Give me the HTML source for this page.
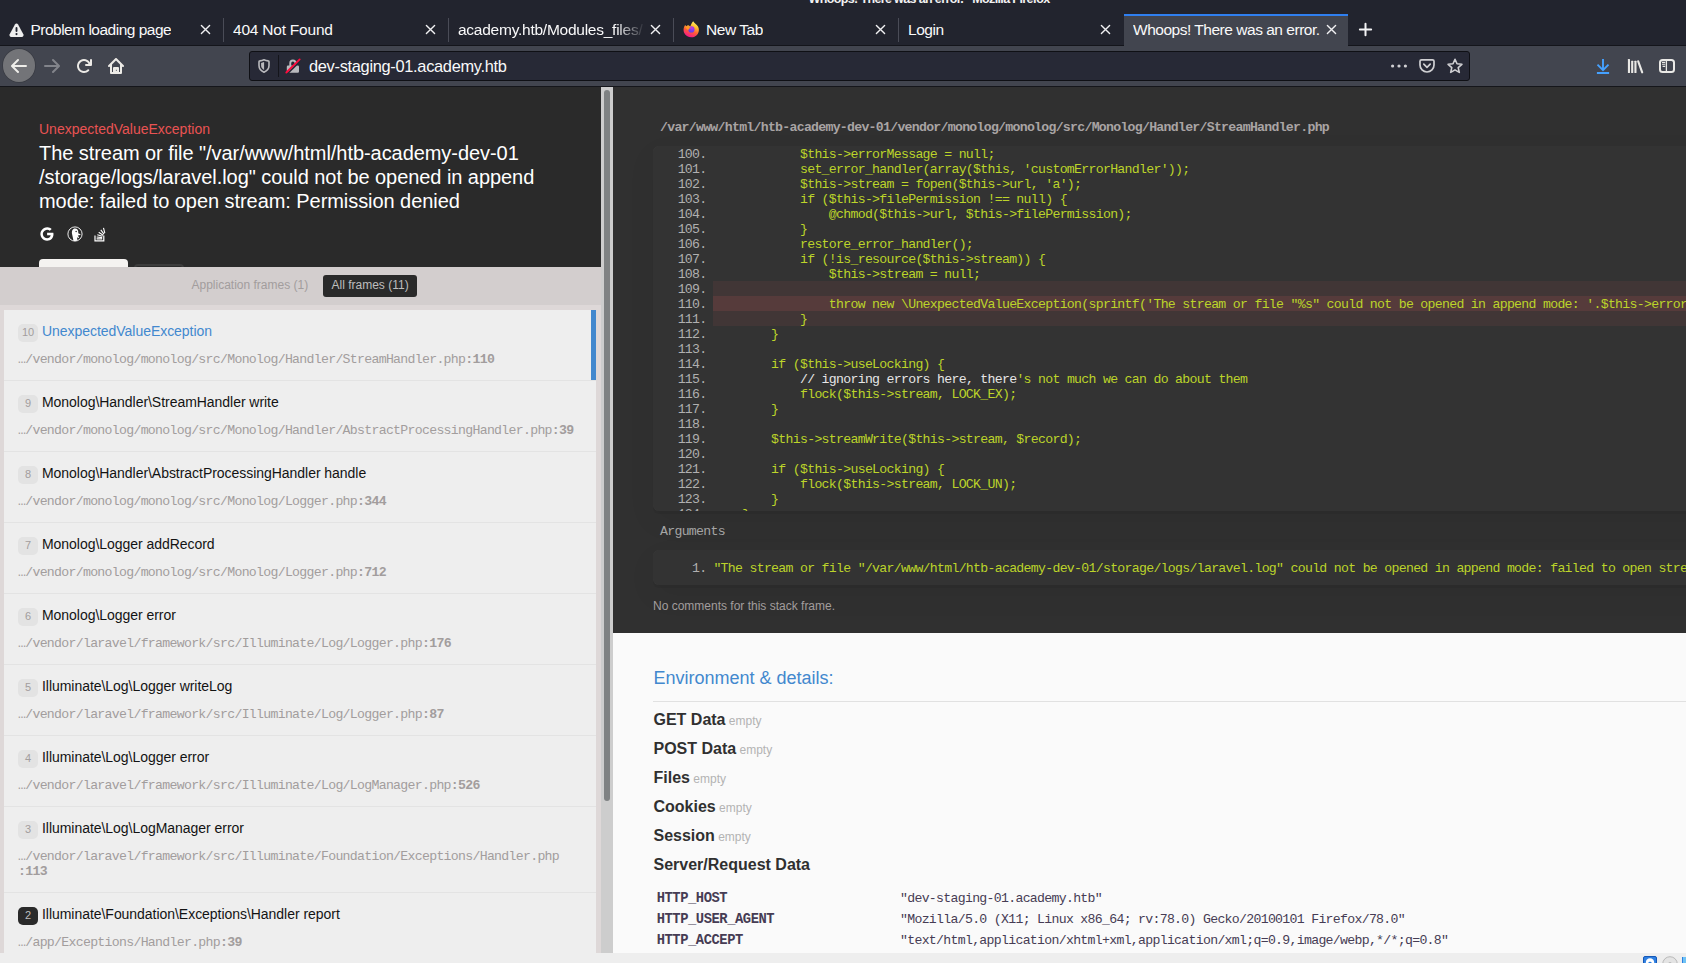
<!DOCTYPE html>
<html>
<head>
<meta charset="utf-8">
<title>Whoops! There was an error.</title>
<style>
*{box-sizing:border-box;}
html,body{margin:0;padding:0;}
body{width:1686px;height:963px;overflow:hidden;position:relative;background:#2a2a2a;font:12px "Liberation Sans",sans-serif;color:#131313;}
.abs{position:absolute;}
/* ---------- browser chrome ---------- */
#tabbar{left:0;top:0;width:1686px;height:45px;background:#22242e;overflow:hidden;}
#wintitle{left:808.500px;top:-8px;width:260px;font:bold 12.5px "Liberation Sans",sans-serif;letter-spacing:-0.63px;color:#f2f2f2;white-space:nowrap;}
.tab{top:9px;height:36px;width:225px;color:#f9f9fa;font:15.5px "Liberation Sans",sans-serif;letter-spacing:-0.45px;}
.tab .lbl{position:absolute;top:12px;white-space:nowrap;overflow:hidden;}
.tab .sep{position:absolute;left:-1px;top:9px;width:1px;height:24px;background:#4a4c57;}
.tab .x{position:absolute;right:13px;top:15px;width:11px;height:11px;}
#toolbar{left:0;top:45px;width:1686px;height:42px;background:#42454f;border-top:1px solid #14151b;border-bottom:1px solid #15161b;}
#urlbar{left:249px;top:51px;width:1221px;height:30px;background:#272936;border:1px solid #0f1015;border-radius:3px;}
#urltext{left:309px;top:57px;letter-spacing:-0.31px;font:16.4px "Liberation Sans",sans-serif;color:#f9f9fa;white-space:nowrap;}

.tab.active{background:#42454f;top:14px;height:31px;border-top:2px solid #2f7ff0;width:224px;}
.tab.active .lbl{top:5px;}
.tab.active .x{top:8px;right:11px;}
.fade{-webkit-mask-image:linear-gradient(to right,#000 158px,transparent 187px);mask-image:linear-gradient(to right,#000 158px,transparent 187px);}
.ic{position:absolute;}
/* ---------- left panel ---------- */
#lhead{left:0;top:87px;width:601px;height:180px;background:#2a2a2a;overflow:hidden;}
#exctitle{left:39px;top:121px;font-size:14px;color:#e95353;white-space:nowrap;}
#excmsg{left:39px;top:141px;width:540px;font-size:20px;line-height:24px;color:#fff;letter-spacing:-0.06px;white-space:nowrap;}
#fdesc{left:0;top:267px;width:601px;height:38px;background:#d3cece;}
#lbody{left:0;top:305px;width:601px;height:648px;background:#ded8d8;}
.ftab{top:275px;height:22px;line-height:20px;font-size:12px;color:#a29d9d;padding:0 8px;border-radius:3px;white-space:nowrap;}
.ftab.act{background:#2a2a2a;color:#bebebe;}
.frame{left:4px;width:592px;background:#eeeeee;border-bottom:1px solid #e3e3e3;height:71px;}
.frame .idx{position:absolute;left:14px;top:14px;width:20px;height:18px;line-height:16.500px;border-radius:5px;background:#e3e3e3;color:#a29d9d;font-size:11px;text-align:center;}
.frame.app .idx{background:#2a2a2a;color:#bebebe;}
.frame .cls{position:absolute;left:38px;top:13px;font-size:14px;line-height:16px;white-space:nowrap;color:#131313;letter-spacing:-0.04px;}
.frame.active .cls{color:#4288ce;}
.frame .file{position:absolute;left:14px;top:42px;width:570px;font:13.2px/15px "Liberation Mono",monospace;letter-spacing:-0.7px;color:#a29d9d;white-space:nowrap;}
.frame .file b{font-weight:bold;}
.frame .bar{position:absolute;right:0;top:0;width:5px;height:70px;background:#4288ce;}
#lscroll{left:601px;top:87px;width:12px;height:866px;background:#cdcdcd;}
#lthumb{left:604px;top:90px;width:6px;height:711px;border-radius:3px;background:#7f8283;}
/* ---------- right panel ---------- */
#rdark{left:613px;top:87px;width:1073px;height:546px;background:#303030;overflow:hidden;}

.rfile{left:660px;top:120px;font:bold 13.2px/15px "Liberation Mono",monospace;letter-spacing:-0.72px;color:#a9a4a4;white-space:nowrap;}
#code{left:653px;top:146px;width:1100px;height:365px;background:#333;border-radius:6px 0 0 6px;overflow:hidden;box-shadow:0 3px 0 rgba(0,0,0,.05),0 10px 30px rgba(0,0,0,.05),inset 0 0 1px 0 rgba(255,255,255,.07);}
#args{left:653px;top:550px;width:1100px;height:35px;background:#333;border-radius:6px 0 0 6px;overflow:hidden;box-shadow:0 3px 0 rgba(0,0,0,.05),0 10px 30px rgba(0,0,0,.05),inset 0 0 1px 0 rgba(255,255,255,.07);}
.ln{position:relative;height:15px;font:13.2px/15px "Liberation Mono",monospace;letter-spacing:-0.7px;white-space:pre;color:#bcd42a;}
.ln .no{position:absolute;left:0;width:53.500px;text-align:right;color:#b0b0b0;top:1px;}
.ln .cd{position:absolute;left:60.400px;right:0;top:0;height:15px;line-height:17px;}
.ln .cd i{font-style:normal;color:#e6e6e6;}
.ln.cur .cd{background:#413636;}
.ln.cura .cd{background:#563b3b;}
.argl{left:660px;top:524px;font:13.2px/15px "Liberation Mono",monospace;letter-spacing:-0.7px;color:#a5a5a5;}
.nocom{left:653px;top:599px;font-size:12px;line-height:14px;color:#a29d9d;white-space:nowrap;}
#rlight{left:613px;top:633px;width:1073px;height:320px;background:#fafafa;overflow:hidden;}

.dh{left:653.500px;top:668px;font-size:18px;line-height:21px;color:#4288ce;white-space:nowrap;}
.dl{left:653.500px;font:bold 16px/18px "Liberation Sans",sans-serif;color:#303030;white-space:nowrap;}
.dl span{font:12px "Liberation Sans",sans-serif;color:#b3b3b3;}
.dk{left:656.700px;font:bold 13.8px/16px "Liberation Mono",monospace;letter-spacing:-0.45px;color:#463c54;white-space:nowrap;}
.dv{left:900px;font:13.2px/16px "Liberation Mono",monospace;letter-spacing:-0.7px;color:#463c54;white-space:nowrap;}
#status{left:0;top:953px;width:1686px;height:10px;background:#eeeeee;}
</style>
</head>
<body>
<!-- ================= BROWSER CHROME ================= -->
<div id="tabbar" class="abs">
  <div id="wintitle" class="abs">Whoops! There was an error. - Mozilla Firefox</div>

  <div class="abs tab" style="left:-1px">
    <svg class="abs" style="left:9.500px;top:13.600px" width="15" height="14.300" viewBox="0 0 16 15" preserveAspectRatio="none"><path d="M8 0.6c.7 0 1.3.4 1.7 1l5.6 10.2c.7 1.3-.2 2.8-1.7 2.8H2.4c-1.5 0-2.400-1.500-1.700-2.800L6.300 1.600C6.700 1 7.300.6 8 .6z" fill="#eeeeee"/><rect x="7" y="4.200" width="2" height="5.300" rx="1" fill="#21232e"/><circle cx="8" cy="11.600" r="1.150" fill="#21232e"/></svg>
    <div class="lbl" style="left:31.400px;letter-spacing:-0.5px">Problem loading page</div><svg class="x" viewBox="0 0 11 11"><path d="M1.400 1.400l8.200 8.200M9.600 1.400l-8.200 8.200" stroke="#f0f0f2" stroke-width="1.400" fill="none" stroke-linecap="round"/></svg>
  </div>
  <div class="abs tab" style="left:224px"><div class="sep"></div>
    <div class="lbl" style="left:9px;letter-spacing:-0.22px">404 Not Found</div><svg class="x" viewBox="0 0 11 11"><path d="M1.400 1.400l8.200 8.200M9.600 1.400l-8.200 8.200" stroke="#f0f0f2" stroke-width="1.400" fill="none" stroke-linecap="round"/></svg>
  </div>
  <div class="abs tab" style="left:449px"><div class="sep"></div>
    <div class="lbl fade" style="left:9px;width:186px;letter-spacing:-0.25px">academy.htb/Modules_files/</div><svg class="x" viewBox="0 0 11 11"><path d="M1.400 1.400l8.200 8.200M9.600 1.400l-8.200 8.200" stroke="#f0f0f2" stroke-width="1.400" fill="none" stroke-linecap="round"/></svg>
  </div>
  <div class="abs tab" style="left:674px"><div class="sep"></div>
    <svg class="abs" style="left:9px;top:12px" width="17" height="17" viewBox="0 0 17 17"><defs><linearGradient id="fg" x1="0.750" y1="0" x2="0.350" y2="1"><stop offset="0" stop-color="#fff36a"/><stop offset="0.300" stop-color="#ffc22f"/><stop offset="0.620" stop-color="#ff5d36"/><stop offset="1" stop-color="#f4128f"/></linearGradient><radialGradient id="pg" cx=".6" cy=".25" r=".85"><stop offset="0" stop-color="#c23ae6"/><stop offset="1" stop-color="#4a3bef"/></radialGradient></defs><path d="M10.200 0.300C11 2.200 13.600 3.200 15 5.600 17 9.200 15.500 14 11.500 15.700 7.500 17.300 2.500 15.500 1 11.500 0 8.600.8 5.600 2.200 3.900 2.500 4.600 3 5 3.500 5.200 4 4.500 4.600 4.100 5.200 3.900 5.600 4.600 6.500 5.100 7.500 5.100 8 3.500 9 1.500 10.200.3z" fill="url(#fg)"/><circle cx="8.400" cy="8.400" r="3.100" fill="url(#pg)"/><path d="M2.600 5.800C4.200 5 6.200 5.600 8.200 7.100 6.600 7.100 5.500 7.900 5.300 9.200 4 8.600 3 7.500 2.600 5.800z" fill="#ff9c1f"/></svg>
    <div class="lbl" style="left:32px">New Tab</div><svg class="x" viewBox="0 0 11 11"><path d="M1.400 1.400l8.200 8.200M9.600 1.400l-8.200 8.200" stroke="#f0f0f2" stroke-width="1.400" fill="none" stroke-linecap="round"/></svg>
  </div>
  <div class="abs tab" style="left:899px"><div class="sep"></div>
    <div class="lbl" style="left:9px">Login</div><svg class="x" viewBox="0 0 11 11"><path d="M1.400 1.400l8.200 8.200M9.600 1.400l-8.200 8.200" stroke="#f0f0f2" stroke-width="1.400" fill="none" stroke-linecap="round"/></svg>
  </div>
  <div class="abs tab active" style="left:1124px">
    <div class="lbl" style="left:9px;letter-spacing:-0.48px">Whoops! There was an error.</div><svg class="x" viewBox="0 0 11 11"><path d="M1.400 1.400l8.200 8.200M9.600 1.400l-8.200 8.200" stroke="#f0f0f2" stroke-width="1.400" fill="none" stroke-linecap="round"/></svg>
  </div>
  <svg class="abs" style="left:1357.500px;top:22px" width="15" height="15" viewBox="0 0 15 15"><path d="M7.500 1.850v11.300M1.850 7.500h11.300" stroke="#f4f4f6" stroke-width="2" stroke-linecap="round" fill="none"/></svg>
</div>
<div id="toolbar" class="abs"></div>
<div class="abs" style="left:1124px;top:45px;width:224px;height:1px;background:#42454f"></div>
<div id="urlbar" class="abs"></div>
<div id="urltext" class="abs">dev-staging-01.academy.htb</div>


<!-- nav icons -->
<div class="abs" style="left:3px;top:49.300px;width:32px;height:32.800px;border-radius:17px;background:#737478;box-shadow:0 0 0 0.700px #383a42;"></div>
<svg class="ic" style="left:10.500px;top:58px" width="16" height="16" viewBox="0 0 16 16"><path d="M15 7H3.414l4.293-4.293a1 1 0 0 0-1.414-1.414l-6 6a1 1 0 0 0 0 1.414l6 6a1 1 0 0 0 1.414-1.414L3.414 9H15a1 1 0 0 0 0-2z" fill="#efeeea"/></svg>
<svg class="ic" style="left:44px;top:58px" width="16" height="16" viewBox="0 0 16 16"><path d="M1 7h11.586L8.293 2.707a1 1 0 0 1 1.414-1.414l6 6a1 1 0 0 1 0 1.414l-6 6a1 1 0 0 1-1.414-1.414L12.586 9H1a1 1 0 0 1 0-2z" fill="#82848b"/></svg>
<svg class="ic" style="left:76px;top:58px" width="16" height="16" viewBox="0 0 16 16"><path d="M15 1a1 1 0 0 0-1 1v2.418A6.995 6.995 0 1 0 8 15a6.954 6.954 0 0 0 4.950-2.050 1 1 0 0 0-1.414-1.414A5.019 5.019 0 1 1 12.549 6H10a1 1 0 0 0 0 2h5a1 1 0 0 0 1-1V2a1 1 0 0 0-1-1z" fill="#eceae6"/></svg>
<svg class="ic" style="left:108px;top:58px" width="16" height="16" viewBox="0 0 16 16"><path d="M15.707 7.293l-7-7a1 1 0 0 0-1.414 0l-7 7a1 1 0 0 0 1.414 1.414L2 8.414V15a1 1 0 0 0 1 1h10a1 1 0 0 0 1-1V8.414l.293.293a1 1 0 0 0 1.414-1.414zM9 14H7v-3h2zm3 0h-1v-4a1 1 0 0 0-1-1H6a1 1 0 0 0-1 1v4H4V6.414l4-4 4 4z" fill="#eceae6"/><rect x="6.800" y="10.500" width="2.400" height="4" fill="#eceae6"/><rect x="7.900" y="11.800" width="0.900" height="1" fill="#42454f"/></svg>
<!-- urlbar icons -->
<svg class="ic" style="left:256px;top:58px" width="16" height="16" viewBox="0 0 16 16"><path d="M3 3.800Q3 3 3.900 2.900 6 2.600 8 1.800 10 2.600 12.100 2.900 13 3 13 3.800L13 7.600C13 10.800 11 13 8 14.300 5 13 3 10.800 3 7.600z" fill="none" stroke="#b9b9bd" stroke-width="1.600" stroke-linejoin="round"/><path d="M8.100 4.100V11.900C6.300 10.900 5.100 9.600 5.100 7.500V5C6.100 4.900 7.100 4.600 8.100 4.100z" fill="#b9b9bd"/></svg>
<div class="abs" style="left:278px;top:55px;width:1px;height:22px;background:#14151b"></div>
<svg class="ic" style="left:285px;top:58px" width="16" height="16" viewBox="0 0 16 16"><path d="M4.300 7.600V5.200a3.600 3.600 0 0 1 7.200 0V7.600h1.300A1.200 1.200 0 0 1 14 8.800v4.800A1.200 1.200 0 0 1 12.800 14.800H3A1.200 1.200 0 0 1 1.800 13.600V8.800A1.200 1.200 0 0 1 3 7.600zm1.900 0h3.400V5.200a1.700 1.700 0 0 0-3.400 0z" fill="#b9b9bd"/><path d="M2.400 15.600L15.800 2.500" stroke="#272936" stroke-width="1.800"/><path d="M1.300 14.500L14.700 1.400" stroke="#ff0a3c" stroke-width="1.800" stroke-linecap="round"/></svg>
<svg class="ic" style="left:1390px;top:63px" width="18" height="6" viewBox="0 0 18 6"><circle cx="2.600" cy="3" r="1.600" fill="#d0d0d3"/><circle cx="9" cy="3" r="1.600" fill="#d0d0d3"/><circle cx="15.400" cy="3" r="1.600" fill="#d0d0d3"/></svg>
<svg class="ic" style="left:1419px;top:58px" width="16" height="16" viewBox="0 0 16 16"><path d="M2.500 1.800h11A1.500 1.500 0 0 1 15 3.300V7a7 7 0 0 1-14 0V3.300a1.500 1.500 0 0 1 1.500-1.500z" fill="none" stroke="#d0d0d3" stroke-width="1.700"/><path d="M4.800 6.200L8 9.300l3.200-3.100" fill="none" stroke="#d0d0d3" stroke-width="1.700" stroke-linecap="round" stroke-linejoin="round"/></svg>
<svg class="ic" style="left:1447px;top:58px" width="16" height="16" viewBox="0 0 16 16"><path d="M8 1.300l2 4.500 4.900.5-3.700 3.300 1.100 4.800L8 11.900l-4.300 2.500 1.100-4.800L1.100 6.300 6 5.800z" fill="none" stroke="#d0d0d3" stroke-width="1.600" stroke-linejoin="round"/></svg>
<svg class="ic" style="left:1595px;top:58px" width="16" height="16" viewBox="0 0 16 16"><path d="M8 1v11M2.500 6.700L8 12.200l5.500-5.500M1.900 15h12.200" fill="none" stroke="#45a1ff" stroke-width="1.900" stroke-linecap="butt" stroke-linejoin="miter"/></svg>
<svg class="ic" style="left:1627px;top:58px" width="17" height="16" viewBox="0 0 17 16"><rect x="0.900" y="0.900" width="2.100" height="14.100" rx="0.500" fill="#eae9e6"/><rect x="4.150" y="2.700" width="2.100" height="12.300" rx="0.500" fill="#eae9e6"/><rect x="7.400" y="2.700" width="2.100" height="12.300" rx="0.500" fill="#eae9e6"/><path d="M11.200 3.300l4 11" stroke="#eae9e6" stroke-width="2.100" stroke-linecap="round" fill="none"/></svg>
<svg class="ic" style="left:1658px;top:58px" width="18" height="16" viewBox="0 0 18 16"><rect x="2" y="1.900" width="14" height="12.200" rx="2.600" fill="none" stroke="#eae9e6" stroke-width="2"/><path d="M8.400 2v12" stroke="#eae9e6" stroke-width="1.300"/><path d="M4 4.400h3.200M4 6.300h3.200M4.600 8.400h2.600" stroke="#eae9e6" stroke-width="1.100"/></svg>

<!-- ================= LEFT PANEL ================= -->
<div id="lhead" class="abs"></div>
<div id="exctitle" class="abs">UnexpectedValueException</div>
<div id="excmsg" class="abs">The stream or file "/var/www/html/htb-academy-dev-01<br>/storage/logs/laravel.log" could not be opened in append<br>mode: failed to open stream: Permission denied</div>

<svg class="ic" style="left:40px;top:227px" width="14" height="14" viewBox="0 0 14 14"><path d="M13.300 5.800H7.100v2.500h3.600c-.4 1.800-1.800 2.900-3.600 2.900a4.200 4.200 0 1 1 2.700-7.400l1.900-1.900A6.800 6.800 0 1 0 7.100 13.800c3.700 0 6.400-2.600 6.400-6.700 0-.4-.1-.9-.2-1.300z" fill="#fff"/></svg>
<svg class="ic" style="left:67px;top:226px" width="16" height="16" viewBox="0 0 16 16"><circle cx="8" cy="8" r="7.100" fill="none" stroke="#fff" stroke-width="0.900"/><path d="M8 2.600C10.200 2.600 11.300 4.300 11.300 6.100L11.200 7.300 13.400 8.300C13.700 8.500 13.600 8.900 13.200 9L10.800 9.600C11 10.200 11.900 10.800 12 11.500 12 12 11.300 12 10.800 11.700L10 11.200 10.500 14.600C9.500 15.100 7.600 15.200 6.500 14.700L5 7.800C4.500 5 5.800 2.600 8 2.600z" fill="#fff"/><circle cx="9.100" cy="5.500" r="0.750" fill="#2a2a2a"/></svg>
<svg class="ic" style="left:94px;top:226px" width="13" height="16" viewBox="0 0 13 16"><path d="M1 9.500v5.300h8.800V9.500" fill="none" stroke="#fff" stroke-width="1.200"/><path d="M2.600 12.900h5.600M2.700 11l5.500.6M3.300 8.700l5.200 1.600M4.700 6.200l4.500 3M6.800 3.800L10 8.100M9.500 1.800l1.300 5.400" stroke="#fff" stroke-width="1.100" fill="none"/></svg>
<div class="abs" style="left:39px;top:259px;width:89px;height:12px;border-radius:4px 4px 0 0;background:#f5f3f1"></div>
<div class="abs" style="left:134px;top:264px;width:50px;height:12px;border-radius:4px;border:2px solid #3c3c3c"></div>
<div id="fdesc" class="abs"></div>
<div id="lbody" class="abs"></div>
<div class="abs ftab" style="left:183.500px">Application frames (1)</div>
<div class="abs ftab act" style="left:323px;padding-left:8.500px;padding-right:8.500px">All frames (11)</div>
<div class="abs frame active" style="top:310px;height:71px"><div class="idx">10</div><div class="cls">UnexpectedValueException</div><div class="file">…/vendor/monolog/monolog/src/Monolog/Handler/StreamHandler.php<b>:110</b></div><div class="bar"></div></div>
<div class="abs frame " style="top:381px;height:71px"><div class="idx">9</div><div class="cls">Monolog\Handler\StreamHandler write</div><div class="file">…/vendor/monolog/monolog/src/Monolog/Handler/AbstractProcessingHandler.php<b>:39</b></div></div>
<div class="abs frame " style="top:452px;height:71px"><div class="idx">8</div><div class="cls">Monolog\Handler\AbstractProcessingHandler handle</div><div class="file">…/vendor/monolog/monolog/src/Monolog/Logger.php<b>:344</b></div></div>
<div class="abs frame " style="top:523px;height:71px"><div class="idx">7</div><div class="cls">Monolog\Logger addRecord</div><div class="file">…/vendor/monolog/monolog/src/Monolog/Logger.php<b>:712</b></div></div>
<div class="abs frame " style="top:594px;height:71px"><div class="idx">6</div><div class="cls">Monolog\Logger error</div><div class="file">…/vendor/laravel/framework/src/Illuminate/Log/Logger.php<b>:176</b></div></div>
<div class="abs frame " style="top:665px;height:71px"><div class="idx">5</div><div class="cls">Illuminate\Log\Logger writeLog</div><div class="file">…/vendor/laravel/framework/src/Illuminate/Log/Logger.php<b>:87</b></div></div>
<div class="abs frame " style="top:736px;height:71px"><div class="idx">4</div><div class="cls">Illuminate\Log\Logger error</div><div class="file">…/vendor/laravel/framework/src/Illuminate/Log/LogManager.php<b>:526</b></div></div>
<div class="abs frame " style="top:807px;height:86px"><div class="idx">3</div><div class="cls">Illuminate\Log\LogManager error</div><div class="file">…/vendor/laravel/framework/src/Illuminate/Foundation/Exceptions/Handler.php<br><b>:113</b></div></div>
<div class="abs frame app" style="top:893px;height:71px"><div class="idx">2</div><div class="cls">Illuminate\Foundation\Exceptions\Handler report</div><div class="file">…/app/Exceptions/Handler.php<b>:39</b></div></div>
<div id="lscroll" class="abs"></div>
<div id="lthumb" class="abs"></div>

<!-- ================= RIGHT PANEL ================= -->
<div id="rdark" class="abs"></div>
<div class="abs rfile">/var/www/html/htb-academy-dev-01/vendor/monolog/monolog/src/Monolog/Handler/StreamHandler.php</div>
<div id="code" class="abs">
<div class="ln"><span class="no">100.</span><span class="cd">            $this-&gt;errorMessage = null;</span></div>
<div class="ln"><span class="no">101.</span><span class="cd">            set_error_handler(array($this, 'customErrorHandler'));</span></div>
<div class="ln"><span class="no">102.</span><span class="cd">            $this-&gt;stream = fopen($this-&gt;url, 'a');</span></div>
<div class="ln"><span class="no">103.</span><span class="cd">            if ($this-&gt;filePermission !== null) {</span></div>
<div class="ln"><span class="no">104.</span><span class="cd">                @chmod($this-&gt;url, $this-&gt;filePermission);</span></div>
<div class="ln"><span class="no">105.</span><span class="cd">            }</span></div>
<div class="ln"><span class="no">106.</span><span class="cd">            restore_error_handler();</span></div>
<div class="ln"><span class="no">107.</span><span class="cd">            if (!is_resource($this-&gt;stream)) {</span></div>
<div class="ln"><span class="no">108.</span><span class="cd">                $this-&gt;stream = null;</span></div>
<div class="ln cur"><span class="no">109.</span><span class="cd"></span></div>
<div class="ln cura"><span class="no">110.</span><span class="cd">                throw new \UnexpectedValueException(sprintf('The stream or file "%s" could not be opened in append mode: '.$this-&gt;errorMessage, $this-&gt;url));</span></div>
<div class="ln cur"><span class="no">111.</span><span class="cd">            }</span></div>
<div class="ln"><span class="no">112.</span><span class="cd">        }</span></div>
<div class="ln"><span class="no">113.</span><span class="cd"></span></div>
<div class="ln"><span class="no">114.</span><span class="cd">        if ($this-&gt;useLocking) {</span></div>
<div class="ln"><span class="no">115.</span><span class="cd">            <i>// ignoring errors here, there</i>'s not much we can do about them</span></div>
<div class="ln"><span class="no">116.</span><span class="cd">            flock($this-&gt;stream, LOCK_EX);</span></div>
<div class="ln"><span class="no">117.</span><span class="cd">        }</span></div>
<div class="ln"><span class="no">118.</span><span class="cd"></span></div>
<div class="ln"><span class="no">119.</span><span class="cd">        $this-&gt;streamWrite($this-&gt;stream, $record);</span></div>
<div class="ln"><span class="no">120.</span><span class="cd"></span></div>
<div class="ln"><span class="no">121.</span><span class="cd">        if ($this-&gt;useLocking) {</span></div>
<div class="ln"><span class="no">122.</span><span class="cd">            flock($this-&gt;stream, LOCK_UN);</span></div>
<div class="ln"><span class="no">123.</span><span class="cd">        }</span></div>
<div class="ln"><span class="no">124.</span><span class="cd">    }</span></div>
</div>
<div class="abs argl">Arguments</div>
<div id="args" class="abs"><div class="ln" style="top:10px"><span class="no">1.</span><span class="cd">"The stream or file "/var/www/html/htb-academy-dev-01/storage/logs/laravel.log" could not be opened in append mode: failed to open stream: Permission denied"</span></div></div>
<div class="abs nocom">No comments for this stack frame.</div>

<div id="rlight" class="abs"></div>

<div class="abs dh">Environment &amp; details:</div>
<div class="abs" style="left:653px;top:701px;width:1040px;height:1px;background:#e1e1e1"></div>
<div class="abs dl" style="top:711px">GET Data<span> empty</span></div>
<div class="abs dl" style="top:740px">POST Data<span> empty</span></div>
<div class="abs dl" style="top:769px">Files<span> empty</span></div>
<div class="abs dl" style="top:798px">Cookies<span> empty</span></div>
<div class="abs dl" style="top:827px">Session<span> empty</span></div>
<div class="abs dl" style="top:856px">Server/Request Data</div>
<div class="abs dk" style="top:891.3px">HTTP_HOST</div><div class="abs dv" style="top:891px">"dev-staging-01.academy.htb"</div>
<div class="abs dk" style="top:912.3px">HTTP_USER_AGENT</div><div class="abs dv" style="top:912px">"Mozilla/5.0 (X11; Linux x86_64; rv:78.0) Gecko/20100101 Firefox/78.0"</div>
<div class="abs dk" style="top:933.3px">HTTP_ACCEPT</div><div class="abs dv" style="top:933px">"text/html,application/xhtml+xml,application/xml;q=0.9,image/webp,*/*;q=0.8"</div>
<div id="status" class="abs">
<svg class="abs" style="left:1643px;top:3px" width="14" height="7" viewBox="0 0 14 7"><rect x="0.500" y="0.500" width="13" height="12" rx="1.500" fill="#2f7fe0" stroke="#1558b8"/><circle cx="7" cy="6.500" r="4.200" fill="#fff"/><circle cx="7" cy="7.500" r="1.800" fill="#2f7fe0"/></svg>
<svg class="abs" style="left:1662px;top:3px" width="16" height="7" viewBox="0 0 16 7"><circle cx="8" cy="8" r="7.300" fill="#e4e4e4" stroke="#b9b9b9"/><circle cx="8" cy="8" r="1.800" fill="#aaa"/></svg>
<div class="abs" style="left:1682px;top:4px;width:4px;height:6px;background:#6fc3f5;border-left:1px solid #2f7fe0"></div>
</div>
</body>
</html>
